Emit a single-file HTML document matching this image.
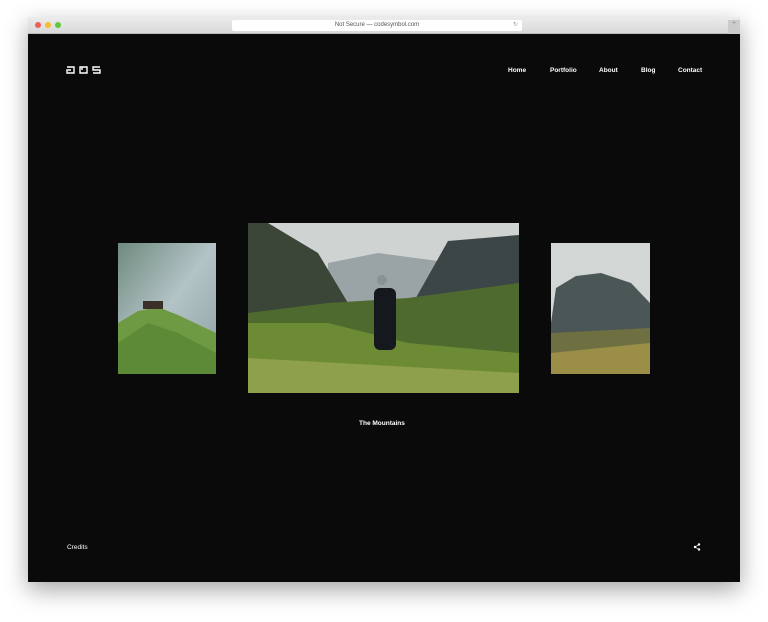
<!DOCTYPE html>
<html><head><style>
*{margin:0;padding:0;box-sizing:border-box}
body{width:768px;height:622px;background:#fff;position:relative;overflow:hidden;font-family:"Liberation Sans",sans-serif}
.win{position:absolute;left:28px;top:17px;width:712px;height:565px;box-shadow:0 8px 22px rgba(0,0,0,.35);background:#0a0a0a}
.bar{position:absolute;left:0;top:0;width:712px;height:17px;background:linear-gradient(#ececec,#d9d9d9);border-bottom:1px solid #bbb}
.dot{position:absolute;top:5px;width:6px;height:6px;border-radius:50%}
.url{position:absolute;left:204px;top:3px;width:290px;height:11px;background:#fff;border-radius:2px;font-size:6px;color:#555;text-align:center;line-height:11px}
.plus{position:absolute;right:0;top:3px;width:12px;height:14px;background:#ccc;font-size:7px;color:#888;text-align:center}
.t{position:absolute;color:#fff;font-size:6.5px;font-weight:bold}
.img{position:absolute;overflow:hidden}
</style></head><body>
<div class="win">
<div class="bar"><div class="dot" style="left:7px;background:#ee5f57"></div><div class="dot" style="left:17px;background:#f5bd2f"></div><div class="dot" style="left:27px;background:#5fc83f"></div>
<div class="url">Not Secure — codesymbol.com<span style="position:absolute;right:4px;color:#999">↻</span></div><div class="plus">+</div></div>
<svg style="position:absolute;left:38px;top:49px" width="36" height="8" viewBox="0 0 36 8" fill="none" stroke="#fff" stroke-width="1.4">
<path d="M1 1H8V7H1V4H5"/><path d="M14 1H21V7H14Z M16 1V4"/><path d="M34 1H27V4H34V7H27"/></svg>
<div class="t" style="left:480px;top:50px">Home</div>
<div class="t" style="left:522px;top:50px">Portfolio</div>
<div class="t" style="left:571px;top:50px">About</div>
<div class="t" style="left:613px;top:50px">Blog</div>
<div class="t" style="left:650px;top:50px">Contact</div>
<div class="t" style="left:331px;top:403px">The Mountains</div>
<div class="t" style="left:39px;top:527px;font-weight:normal">Credits</div>
<svg style="position:absolute;left:665px;top:526px" width="8" height="8" viewBox="0 0 8 8"><circle cx="6" cy="1.5" r="1.2" fill="#fff"/><circle cx="6" cy="6.5" r="1.2" fill="#fff"/><circle cx="2" cy="4" r="1.2" fill="#fff"/><path d="M6 1.5L2 4L6 6.5" stroke="#fff" stroke-width=".7" fill="none"/></svg>
</div>
<svg class="img" style="left:118px;top:243px" width="98" height="131" viewBox="0 0 98 131">
<defs><linearGradient id="a" x1="0" y1="0" x2="1" y2="1"><stop offset="0" stop-color="#6f8a7e"/><stop offset=".5" stop-color="#b3c3c6"/><stop offset="1" stop-color="#8ea0a3"/></linearGradient></defs>
<rect width="98" height="131" fill="url(#a)"/>
<path d="M0 80L20 68L40 64L60 72L98 90V131H0Z" fill="#6e9a43"/>
<path d="M0 100L30 80L60 90L98 110V131H0Z" fill="#5c8a36"/>
<rect x="25" y="58" width="20" height="8" fill="#3a3028"/>
</svg>
<svg class="img" style="left:248px;top:223px" width="271" height="170" viewBox="0 0 271 170">
<rect width="271" height="170" fill="#cfd3d1"/>
<path d="M80 40L130 30L190 38V80H80Z" fill="#9aa4a6"/>
<path d="M0 0H20L70 30L100 80L120 90V120H0Z" fill="#3b4638"/>
<path d="M271 12L200 18L165 80L271 75Z" fill="#3c4647"/>
<path d="M0 90L80 80L160 75L271 60V170H0Z" fill="#4f6a2e"/>
<path d="M0 100L80 100L160 120L271 130V170H0Z" fill="#6d8a34"/>
<path d="M0 135L271 150V170H0Z" fill="#8fa04c"/>
<rect x="126" y="65" width="22" height="62" rx="6" fill="#15181c"/>
<circle cx="134" cy="57" r="5" fill="#8b9094"/>
</svg>
<svg class="img" style="left:551px;top:243px" width="99" height="131" viewBox="0 0 99 131">
<rect width="99" height="131" fill="#d2d6d4"/>
<path d="M0 80L5 45L25 33L50 30L80 40L99 60V131H0Z" fill="#4b5656"/>
<path d="M0 90L99 85V131H0Z" fill="#6e7042"/>
<path d="M0 110L99 100V131H0Z" fill="#9b8f48"/>
</svg>
</body></html>
